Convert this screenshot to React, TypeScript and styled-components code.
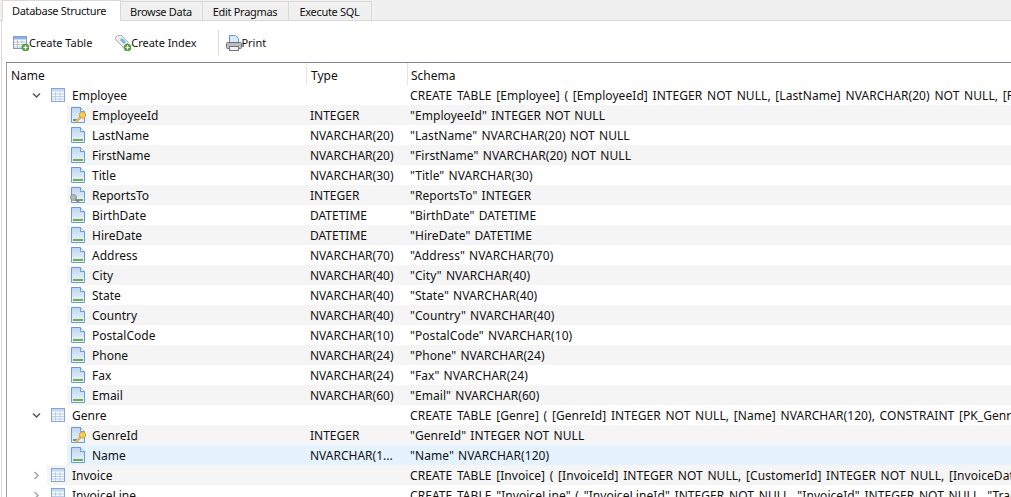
import React from 'react';
import styled, { createGlobalStyle } from 'styled-components';

const GlobalStyle = createGlobalStyle`
    html, body {
        margin: 0;
        padding: 0;
        background: #fff;
        overflow: hidden;
    }
`;

const Page = styled.div`
    width: 1011px;
    height: 497px;
    overflow: hidden;
    font-family: "Noto Sans", "Liberation Sans", sans-serif;
    font-size: 12px;
    color: #111;
    background: #fff;
`;

const TabBar = styled.div`
    height: 21px;
    display: flex;
    align-items: flex-end;
    box-sizing: border-box;
    padding-left: 2px;
    background: #f0f0f0;
    border-bottom: 1px solid #d9d9d9;
    font-size: 11px;
    letter-spacing: -0.3px;
    white-space: nowrap;
`;

const Tab = styled.div<{ $active?: boolean; $w: number }>`
    width: ${p => p.$w}px;
    height: ${p => (p.$active ? 21 : 19)}px;
    margin-bottom: ${p => (p.$active ? -1 : 0)}px;
    box-sizing: border-box;
    display: flex;
    align-items: center;
    justify-content: center;
    padding-bottom: ${p => (p.$active ? 2 : 0)}px;
    padding-right: ${p => (p.$active ? 5 : 1)}px;
    background: ${p => (p.$active ? '#fff' : '#f0f0f0')};
    border: 1px solid #d9d9d9;
    border-left-width: ${p => (p.$active ? 1 : 0)}px;
    border-bottom: 0;
`;

const Content = styled.div`
    margin-left: 1px;
    border-left: 1px solid #d9d9d9;
`;

const Toolbar = styled.div`
    height: 41px;
    box-sizing: border-box;
    padding: 2px 0 0 11px;
    display: flex;
    align-items: center;
    font-size: 11px;
    letter-spacing: -0.05px;
`;

const ToolButton = styled.div<{ $gap: number }>`
    display: flex;
    align-items: center;
    margin-right: ${p => p.$gap}px;
`;

const ToolSeparator = styled.div`
    width: 1px;
    height: 25px;
    background: #d9d9d9;
    margin-right: 7px;
`;

const Tree = styled.div`
    margin-left: 4px;
    border-top: 1px solid #828790;
    border-left: 1px solid #a0a0a0;
`;

const HeaderRow = styled.div`
    height: 22px;
    display: grid;
    grid-template-columns: 300px 101px 1fr;
`;

const HeaderCell = styled.div<{ $pad: number }>`
    box-sizing: border-box;
    padding: 2px 0 0 ${p => p.$pad}px;
    display: flex;
    align-items: center;
    border-right: 1px solid #e5e5e5;
    &:last-child {
        border-right: 0;
    }
`;

const Row = styled.div<{ $shade: 'none' | 'child' | 'table'; $selected?: boolean }>`
    height: 20px;
    display: grid;
    grid-template-columns: 300px 101px 1fr;
    white-space: nowrap;
    background: ${p => {
        if (p.$shade === 'none' && !p.$selected) return '#fff';
        const color = p.$selected ? '#e5f3ff' : '#f5f5f5';
        const start = p.$shade === 'table' ? 40 : 60;
        return `linear-gradient(to right, #fff ${start}px, ${color} ${start}px)`;
    }};
`;

const NameCell = styled.div<{ $indent: number }>`
    display: flex;
    align-items: center;
    padding-left: ${p => p.$indent}px;
    overflow: hidden;
`;

const Arrow = styled.svg`
    width: 9px;
    height: 9px;
    margin-right: 9px;
    flex: none;
`;

const RowIcon = styled.svg`
    width: 16px;
    height: 16px;
    margin-right: 6px;
    flex: none;
`;

const ToolIcon = styled.svg`
    width: 16px;
    height: 16px;
    flex: none;
`;

const TypeCell = styled.div`
    display: flex;
    align-items: center;
    padding-left: 3px;
    overflow: hidden;
`;

const SchemaCell = styled.div<{ $long?: boolean }>`
    display: flex;
    align-items: center;
    padding-left: 2px;
    overflow: hidden;
    word-spacing: ${p => (p.$long ? 1.5 : 1)}px;
    letter-spacing: 0.06px;
`;

const TableIcon = () => (
    <RowIcon viewBox="0 0 16 16">
        <rect x="1.5" y="1.5" width="13" height="13" fill="#f6f9fd" stroke="#86a6d4" />
        <rect x="2" y="2" width="12" height="2.5" fill="#c6d8f1" />
        <path d="M2 7h12M2 9.5h12M2 12h12M5.5 5v9M10 5v9" stroke="#bccfe9" strokeWidth="1" fill="none" />
    </RowIcon>
);

const FieldBase = ({ id }: { id: string }) => (
    <>
        <defs>
            <linearGradient id={id} x1="0" y1="0" x2="0" y2="1">
                <stop offset="0" stopColor="#bcd6f2" />
                <stop offset="1" stopColor="#eef5fc" />
            </linearGradient>
        </defs>
        <path d="M1.5.5h9l4 4v11h-13z" fill={`url(#${id})`} stroke="#6a9bd0" />
        <path d="M10.5.5v4h4" fill="#f4f8fd" stroke="#6a9bd0" />
    </>
);

const FieldIcon = () => (
    <RowIcon viewBox="0 0 16 16">
        <FieldBase id="fieldFill" />
        <rect x="3" y="12" width="10" height="2" fill="#6fae4a" />
    </RowIcon>
);

const PrimaryKeyIcon = () => (
    <RowIcon viewBox="0 0 16 16">
        <FieldBase id="pkFill" />
        <rect x="3" y="12" width="4" height="2" fill="#5b8cc4" />
        <path d="M5.5 15l6-6M7.5 15l-1.500-1.500M9.500 13l-1.500-1.500" stroke="#c79a2b" strokeWidth="2.4" fill="none" />
        <path d="M5.500 15l6-6" stroke="#f2cc62" strokeWidth="1.200" fill="none" />
        <circle cx="12.500" cy="8" r="3.200" fill="#f2cc62" stroke="#c79a2b" strokeWidth="0.800" />
    </RowIcon>
);

const ForeignKeyIcon = () => (
    <RowIcon viewBox="0 0 16 16">
        <FieldBase id="fkFill" />
        <rect x="8" y="12" width="5" height="2" fill="#6fae4a" />
        <path d="M9 14.5l-6-3.5" stroke="#808080" strokeWidth="2.6" fill="none" />
        <circle cx="3.5" cy="10.5" r="3" fill="#b8b8b8" stroke="#808080" strokeWidth="0.8" />
    </RowIcon>
);

const PlusBadge = () => (
    <>
        <circle cx="12.5" cy="12.5" r="3.5" fill="#5aa845" stroke="#3d8030" strokeWidth="0.6" />
        <path d="M10.5 12.5h4M12.5 10.5v4" stroke="#fff" strokeWidth="1.2" />
    </>
);

const CreateTableIcon = () => (
    <ToolIcon viewBox="0 0 16 16">
        <rect x="0.5" y="1.5" width="13" height="12" fill="#fff" stroke="#7d9fd0" />
        <rect x="1" y="2" width="12" height="2.5" fill="#8fb2e2" />
        <path d="M1 7h12M1 9.5h12M1 12h12M4.5 5v8M9 5v8" stroke="#b9c6c9" fill="none" />
        <PlusBadge />
    </ToolIcon>
);

const CreateIndexIcon = () => (
    <ToolIcon viewBox="0 0 16 16">
        <path d="M.5 2.5l2-2h4l7 7-5 5-8-8z" fill="#ececec" stroke="#b0b0b0" />
        <path d="M5 5l4 4 2-2-4-4z" fill="#6fb4e8" />
        <PlusBadge />
    </ToolIcon>
);

const PrintIcon = () => (
    <ToolIcon viewBox="0 0 16 16">
        <path d="M3.5.5h6l3 3v6h-9z" fill="#dbe8f7" stroke="#6d93c4" />
        <rect x="0.5" y="7.5" width="15" height="6" rx="1" fill="#b9bdc2" stroke="#6f7378" />
        <rect x="3.5" y="11.5" width="9" height="4" fill="#f2f2f2" stroke="#6f7378" />
    </ToolIcon>
);

const Chevron = ({ open }: { open: boolean }) => (
    <Arrow viewBox="0 0 9 9">
        {open
            ? <path d="M1 2.5l3.5 3.5L8 2.5" fill="none" stroke="#555" strokeWidth="1.5" />
            : <path d="M2.5 1l3.5 3.5L2.5 8" fill="none" stroke="#a6a6a6" strokeWidth="1.5" />}
    </Arrow>
);

type Field = { name: string; type: string; kind?: 'pk' | 'fk' };

const employeeFields: Field[] = [
    { name: 'EmployeeId', type: 'INTEGER', kind: 'pk' },
    { name: 'LastName', type: 'NVARCHAR(20)' },
    { name: 'FirstName', type: 'NVARCHAR(20)' },
    { name: 'Title', type: 'NVARCHAR(30)' },
    { name: 'ReportsTo', type: 'INTEGER', kind: 'fk' },
    { name: 'BirthDate', type: 'DATETIME' },
    { name: 'HireDate', type: 'DATETIME' },
    { name: 'Address', type: 'NVARCHAR(70)' },
    { name: 'City', type: 'NVARCHAR(40)' },
    { name: 'State', type: 'NVARCHAR(40)' },
    { name: 'Country', type: 'NVARCHAR(40)' },
    { name: 'PostalCode', type: 'NVARCHAR(10)' },
    { name: 'Phone', type: 'NVARCHAR(24)' },
    { name: 'Fax', type: 'NVARCHAR(24)' },
    { name: 'Email', type: 'NVARCHAR(60)' },
];

const schemaFor = (f: Field) => {
    if (f.kind === 'pk') return `"${f.name}" ${f.type} NOT NULL`;
    if (f.name === 'LastName' || f.name === 'FirstName') return `"${f.name}" ${f.type} NOT NULL`;
    return `"${f.name}" ${f.type}`;
};

const FieldRow = ({ field, shade, selected, typeLabel, schema }: {
    field: Field;
    shade: boolean;
    selected?: boolean;
    typeLabel?: string;
    schema?: string;
}) => (
    <Row $shade={shade || selected ? 'child' : 'none'} $selected={selected}>
        <NameCell $indent={63}>
            {field.kind === 'pk' && <PrimaryKeyIcon />}
            {field.kind === 'fk' && <ForeignKeyIcon />}
            {!field.kind && <FieldIcon />}
            {field.name}
        </NameCell>
        <TypeCell>{typeLabel ?? field.type}</TypeCell>
        <SchemaCell>{schema ?? schemaFor(field)}</SchemaCell>
    </Row>
);

const TableRow = ({ name, open, shade, schema }: { name: string; open: boolean; shade?: boolean; schema: string }) => (
    <Row $shade={shade ? 'table' : 'none'}>
        <NameCell $indent={25}>
            <Chevron open={open} />
            <TableIcon />
            {name}
        </NameCell>
        <TypeCell />
        <SchemaCell $long>{schema}</SchemaCell>
    </Row>
);

export default function App() {
    return (
        <Page>
            <GlobalStyle />
            <TabBar>
                <Tab $active $w={119}>Database Structure</Tab>
                <Tab $w={82}>Browse Data</Tab>
                <Tab $w={86}>Edit Pragmas</Tab>
                <Tab $w={83}>Execute SQL</Tab>
            </TabBar>
            <Content>
                <Toolbar>
                    <ToolButton $gap={23}><CreateTableIcon />Create Table</ToolButton>
                    <ToolButton $gap={21}><CreateIndexIcon />Create Index</ToolButton>
                    <ToolSeparator />
                    <ToolButton $gap={0}><PrintIcon />Print</ToolButton>
                </Toolbar>
                <Tree>
                    <HeaderRow>
                        <HeaderCell $pad={4}>Name</HeaderCell>
                        <HeaderCell $pad={4}>Type</HeaderCell>
                        <HeaderCell $pad={3}>Schema</HeaderCell>
                    </HeaderRow>
                    <TableRow
                        name="Employee"
                        open
                        schema="CREATE TABLE [Employee] ( [EmployeeId] INTEGER NOT NULL, [LastName] NVARCHAR(20) NOT NULL, [FirstName] NVARCHAR(20) NOT NULL"
                    />
                    {employeeFields.map((f, i) => (
                        <FieldRow key={f.name} field={f} shade={i % 2 === 0} />
                    ))}
                    <TableRow
                        name="Genre"
                        open
                        schema="CREATE TABLE [Genre] ( [GenreId] INTEGER NOT NULL, [Name] NVARCHAR(120), CONSTRAINT [PK_Genre] PRIMARY KEY ([GenreId]) )"
                    />
                    <FieldRow field={{ name: 'GenreId', type: 'INTEGER', kind: 'pk' }} shade />
                    <FieldRow field={{ name: 'Name', type: 'NVARCHAR(120)' }} shade={false} selected typeLabel="NVARCHAR(1..." schema={'"Name" NVARCHAR(120)'} />
                    <TableRow
                        name="Invoice"
                        open={false}
                        shade
                        schema="CREATE TABLE [Invoice] ( [InvoiceId] INTEGER NOT NULL, [CustomerId] INTEGER NOT NULL, [InvoiceDate] DATETIME NOT NULL, [BillingAddress]"
                    />
                    <TableRow
                        name="InvoiceLine"
                        open={false}
                        schema={'CREATE TABLE "InvoiceLine" ( "InvoiceLineId" INTEGER NOT NULL, "InvoiceId" INTEGER NOT NULL, "TrackId" INTEGER NOT NULL'}
                    />
                </Tree>
            </Content>
        </Page>
    );
}
